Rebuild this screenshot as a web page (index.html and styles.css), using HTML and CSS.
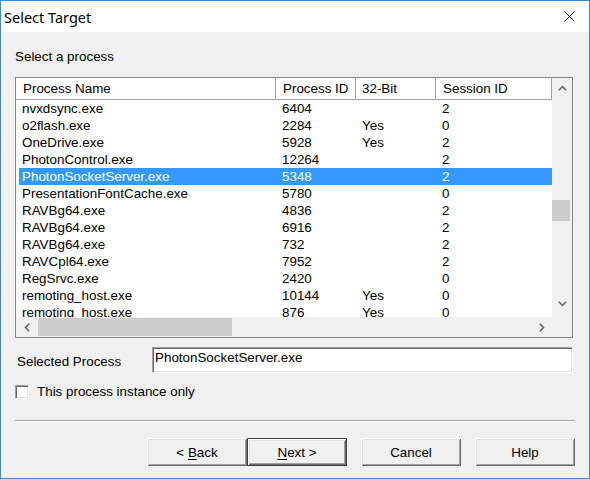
FILE: index.html
```html
<!DOCTYPE html>
<html>
<head>
<meta charset="utf-8">
<link rel="stylesheet" href="styles.css">
</head>
<body>
<div class="window">
  <div class="titlebar">
    <span class="title">Select Target</span>
    <span class="close"><svg width="11" height="11" viewBox="0 0 11 11"><path d="M0.5 0.5 L10.5 10.5 M10.5 0.5 L0.5 10.5" stroke="#000" stroke-width="1" fill="none"/></svg></span>
  </div>
  <div class="content">
    <div class="caption">Select a process</div>
    <div class="list">
      <div class="view">
        <div class="header">
          <div class="hcell c1">Process Name</div>
          <div class="hcell c2">Process ID</div>
          <div class="hcell c3">32-Bit</div>
          <div class="hcell c4">Session ID</div>
        </div>
        <div class="row"><span>nvxdsync.exe</span><span>6404</span><span></span><span>2</span></div>
        <div class="row"><span>o2flash.exe</span><span>2284</span><span>Yes</span><span>0</span></div>
        <div class="row"><span>OneDrive.exe</span><span>5928</span><span>Yes</span><span>2</span></div>
        <div class="row"><span>PhotonControl.exe</span><span>12264</span><span></span><span>2</span></div>
        <div class="row selected"><span>PhotonSocketServer.exe</span><span>5348</span><span></span><span>2</span></div>
        <div class="row"><span>PresentationFontCache.exe</span><span>5780</span><span></span><span>0</span></div>
        <div class="row"><span>RAVBg64.exe</span><span>4836</span><span></span><span>2</span></div>
        <div class="row"><span>RAVBg64.exe</span><span>6916</span><span></span><span>2</span></div>
        <div class="row"><span>RAVBg64.exe</span><span>732</span><span></span><span>2</span></div>
        <div class="row"><span>RAVCpl64.exe</span><span>7952</span><span></span><span>2</span></div>
        <div class="row"><span>RegSrvc.exe</span><span>2420</span><span></span><span>0</span></div>
        <div class="row"><span>remoting_host.exe</span><span>10144</span><span>Yes</span><span>0</span></div>
        <div class="row"><span>remoting_host.exe</span><span>876</span><span>Yes</span><span>0</span></div>
      </div>
      <div class="vscroll">
        <div class="sbtn up"><svg width="9" height="6" viewBox="0 0 9 6"><path d="M0.8 5.2 L4.5 1.5 L8.2 5.2" stroke="#606060" stroke-width="1.5" fill="none"/></svg></div>
        <div class="vtrack"><div class="vthumb"></div></div>
        <div class="sbtn down"><svg width="9" height="6" viewBox="0 0 9 6"><path d="M0.8 0.8 L4.5 4.5 L8.2 0.8" stroke="#606060" stroke-width="1.5" fill="none"/></svg></div>
      </div>
      <div class="hscroll">
        <div class="hbtn"><svg width="6" height="9" viewBox="0 0 6 9"><path d="M5.2 0.8 L1.5 4.5 L5.2 8.2" stroke="#606060" stroke-width="1.5" fill="none"/></svg></div>
        <div class="htrack"><div class="hthumb"></div></div>
        <div class="hbtn"><svg width="6" height="9" viewBox="0 0 6 9"><path d="M0.8 0.8 L4.5 4.5 L0.8 8.2" stroke="#606060" stroke-width="1.5" fill="none"/></svg></div>
      </div>
      <div class="corner"></div>
    </div>
    <div class="selrow">
      <div class="sellabel">Selected Process</div>
      <div class="textbox">PhotonSocketServer.exe</div>
    </div>
    <div class="checkrow">
      <span class="checkbox"></span>
      <span class="checklabel">This process instance only</span>
    </div>
    <div class="separator"></div>
    <div class="buttons">
      <div class="btn">&lt;&nbsp;<u>B</u>ack</div>
      <div class="btn default"><u>N</u>ext&nbsp;&gt;</div>
      <div class="btn gap">Cancel</div>
      <div class="btn gap">Help</div>
    </div>
  </div>
</div>
</body>
</html>
```

FILE: styles.css
```css
html, body {
  margin: 0;
  padding: 0;
}
body {
  width: 590px;
  height: 479px;
  overflow: hidden;
  background: #f0f0f0;
}
.window {
  box-sizing: border-box;
  width: 590px;
  height: 479px;
  border: 1px solid #3b86d8;
  display: flex;
  flex-direction: column;
  font-family: "Liberation Sans", Arial, sans-serif;
  font-size: 13.4px;
  color: #000;
}
.titlebar {
  height: 31px;
  flex: none;
  background: #fff;
  display: flex;
  align-items: center;
  justify-content: space-between;
  padding-left: 3px;
}
.title {
  font-family: "Noto Sans", "Liberation Sans", sans-serif;
  font-size: 14.5px;
  color: #000;
}
.close {
  width: 40px;
  height: 31px;
  display: flex;
  align-items: center;
  justify-content: center;
}
.content {
  flex: 1;
  background: #f0f0f0;
  padding: 17px 14px 0 14px;
  display: flex;
  flex-direction: column;
}
.caption {
  line-height: 15px;
}
.list {
  margin-top: 13px;
  width: 558px;
  height: 261px;
  box-sizing: border-box;
  border: 1px solid #828790;
  display: grid;
  grid-template-columns: 536px 20px;
  grid-template-rows: 239px 20px;
  background: #f0f0f0;
}
.view {
  background: #fff;
  overflow: hidden;
}
.header {
  display: flex;
  height: 21px;
  border-bottom: 1px solid #a0a0a0;
  background: #fff;
}
.hcell {
  box-sizing: border-box;
  line-height: 21px;
  padding-left: 7px;
  border-right: 1px solid #a0a0a0;
  white-space: nowrap;
  overflow: hidden;
}
.hcell.c1 { width: 260px; }
.hcell.c2 { width: 80px; }
.hcell.c3 { width: 80px; padding-left: 6px; }
.hcell.c4 { flex: 1; }
.row {
  display: grid;
  grid-template-columns: 257px 80px 80px 1fr;
  height: 17px;
  line-height: 17px;
  margin-left: 3px;
  white-space: nowrap;
}
.row span {
  padding-left: 6px;
  overflow: hidden;
}
.row span:first-child {
  padding-left: 3px;
}
.row.selected {
  background: #3399ff;
  color: #fff;
}
.vscroll {
  display: flex;
  flex-direction: column;
  background: #f0f0f0;
}
.sbtn {
  height: 20px;
  display: flex;
  align-items: center;
  justify-content: center;
}
.sbtn.down {
  padding-bottom: 6px;
  box-sizing: border-box;
}
.vtrack {
  flex: 1;
}
.vthumb {
  margin-top: 102px;
  height: 21px;
  width: 18px;
  background: #cdcdcd;
}
.hscroll {
  display: flex;
  background: #f0f0f0;
}
.hbtn {
  width: 21px;
  display: flex;
  align-items: center;
  justify-content: center;
}
.htrack {
  flex: 1;
  padding: 1px 0;
}
.hthumb {
  margin-left: 1px;
  width: 194px;
  height: 18px;
  background: #cdcdcd;
}
.corner {
  background: #f0f0f0;
}
.selrow {
  margin-top: 9px;
  display: flex;
  align-items: center;
}
.sellabel {
  width: 135px;
  padding-left: 2px;
  padding-top: 2px;
  line-height: 15px;
}
.textbox {
  box-sizing: border-box;
  width: 421px;
  height: 26px;
  background: #fff;
  border: 1px solid;
  border-color: #a0a0a0 #fff #fff #a0a0a0;
  box-shadow: inset 1px 1px #696969, inset -1px -1px #e3e3e3;
  padding: 2px 0 0 2px;
  line-height: 16px;
}
.checkrow {
  margin-top: 11px;
  display: flex;
  align-items: center;
  height: 15px;
}
.checkbox {
  box-sizing: border-box;
  width: 14px;
  height: 14px;
  background: #fff;
  border: 1px solid;
  border-color: #a0a0a0 #fff #fff #a0a0a0;
  box-shadow: inset 1px 1px #696969, inset -1px -1px #e3e3e3;
}
.checklabel {
  margin-left: 8px;
  line-height: 15px;
}
.separator {
  margin-top: 21px;
  border-top: 1px solid #a0a0a0;
  border-bottom: 1px solid #fff;
}
.buttons {
  margin-top: 16px;
  display: flex;
  justify-content: flex-end;
}
.btn {
  box-sizing: border-box;
  width: 100px;
  height: 28px;
  display: flex;
  align-items: center;
  justify-content: center;
  background: #f0f0f0;
  box-shadow: inset 1px 1px #fff, inset -1px -1px #696969, inset 2px 2px #e3e3e3, inset -2px -2px #a0a0a0;
}
.btn.default {
  border: 1px solid #404040;
}
.btn.gap {
  margin-left: 14px;
}
.btn u {
  text-decoration: underline;
  text-underline-offset: 2px;
}
```
